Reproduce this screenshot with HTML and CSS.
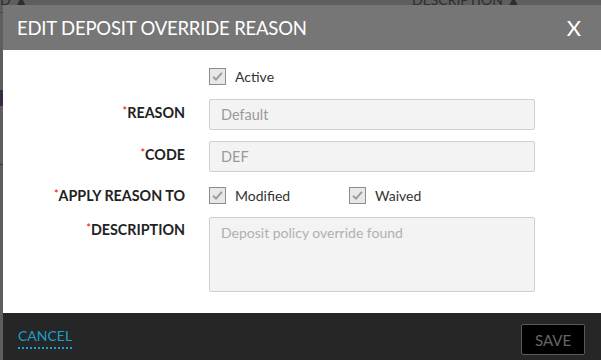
FILE: index.html
```html
<!DOCTYPE html>
<html>
<head>
<meta charset="utf-8">
<link rel="stylesheet" href="styles.css">
</head>
<body>
<div class="backdrop">
  <div class="bg-head">
    <span class="bg-col bg-id">ID ▲</span>
    <span class="bg-col bg-desc">DESCRIPTION ▲</span>
  </div>
  <div class="bg-rows">
    <div class="bg-mark"></div>
    <div class="bg-line"></div>
  </div>
</div>
<div class="modal">
  <div class="modal-header">
    <span class="modal-title">EDIT DEPOSIT OVERRIDE REASON</span>
    <span class="modal-close">X</span>
  </div>
  <div class="modal-body">
    <div class="row row-active">
      <div class="label"></div>
      <div class="field">
        <label class="check"><span class="box"><svg viewBox="0 0 17 17" width="15" height="15"><path d="M3.5 8.8 L6.8 12 L13.5 4.5" fill="none" stroke="#9a9a9a" stroke-width="2.2"/></svg></span>Active</label>
      </div>
    </div>
    <div class="row row-input">
      <div class="label"><span class="req">*</span>REASON</div>
      <div class="field"><div class="input">Default</div></div>
    </div>
    <div class="row row-input">
      <div class="label"><span class="req">*</span>CODE</div>
      <div class="field"><div class="input">DEF</div></div>
    </div>
    <div class="row row-apply">
      <div class="label"><span class="req">*</span>APPLY REASON TO</div>
      <div class="field">
        <label class="check check-mod"><span class="box"><svg viewBox="0 0 17 17" width="15" height="15"><path d="M3.5 8.8 L6.8 12 L13.5 4.5" fill="none" stroke="#9a9a9a" stroke-width="2.2"/></svg></span>Modified</label>
        <label class="check"><span class="box"><svg viewBox="0 0 17 17" width="15" height="15"><path d="M3.5 8.8 L6.8 12 L13.5 4.5" fill="none" stroke="#9a9a9a" stroke-width="2.2"/></svg></span>Waived</label>
      </div>
    </div>
    <div class="row row-desc">
      <div class="label label-top"><span class="req">*</span>DESCRIPTION</div>
      <div class="field"><div class="input textarea">Deposit policy override found</div></div>
    </div>
  </div>
  <div class="modal-footer">
    <span class="cancel">CANCEL</span>
    <span class="save">SAVE</span>
  </div>
</div>
</body>
</html>
```
FILE: styles.css
```css
html, body {
  margin: 0;
  padding: 0;
}
body {
  width: 601px;
  height: 360px;
  overflow: hidden;
  position: relative;
  background: #5e5e5e;
  font-family: Lato, "Open Sans", sans-serif;
}
.backdrop {
  height: 360px;
}
.bg-head {
  height: 12px;
  position: relative;
  border-bottom: 1px solid #4a4a4a;
  color: #2e2e2e;
  font-size: 14px;
  overflow: hidden;
  white-space: nowrap;
}
.bg-col {
  position: absolute;
  top: -9px;
}
.bg-id { left: -4px; }
.bg-desc { left: 412px; }
.bg-rows {
  position: relative;
  height: 340px;
}
.bg-mark {
  position: absolute;
  left: 0;
  top: 77px;
  width: 3px;
  height: 16px;
  background: #3a2a40;
}
.bg-line {
  position: absolute;
  left: 0;
  top: 151px;
  width: 3px;
  height: 1px;
  background: #333;
}
.modal {
  position: absolute;
  left: 3px;
  top: 5px;
  width: 598px;
  display: flex;
  flex-direction: column;
  height: 355px;
}
.modal-header {
  height: 45px;
  background: #767676;
  display: flex;
  align-items: center;
  justify-content: space-between;
  padding: 0 20px 0 14px;
  color: #fff;
  flex: none;
  white-space: nowrap;
}
.modal-title {
  font-size: 18.5px;
  letter-spacing: -0.2px;
  padding-top: 1px;
}
.modal-close {
  font-size: 22px;
  font-weight: 400;
}
.modal-body {
  background: #fff;
  flex: 1;
  padding-top: 18px;
  display: flex;
  flex-direction: column;
}
.row {
  display: flex;
  align-items: center;
}
.label {
  width: 182px;
  text-align: right;
  font-size: 14.3px;
  font-weight: bold;
  color: #222;
  flex: none;
  white-space: nowrap;
}
.row-input .label {
  padding-bottom: 4px;
}
.label-top {
  align-self: flex-start;
  padding-top: 4px;
}
.req {
  color: #e00;
  font-size: 11px;
  vertical-align: 3px;
  font-weight: normal;
}
.field {
  margin-left: 24px;
  display: flex;
  align-items: center;
}
.row-active {
  height: 17px;
  margin-bottom: 14px;
}
.row-input {
  margin-bottom: 11px;
}
.row-apply {
  height: 17px;
  margin-top: 4px;
  margin-bottom: 13px;
}
.check {
  display: flex;
  align-items: center;
  font-size: 14px;
  color: #333;
}
.check-mod {
  width: 140px;
}
.box {
  width: 15px;
  height: 15px;
  border: 1px solid #8c8c8c;
  background: #e8e8e8;
  margin-right: 9px;
  display: flex;
}
.input {
  width: 313px;
  height: 29px;
  border: 1px solid #cfcfcf;
  border-radius: 2px;
  background: #f3f3f3;
  color: #9a9a9a;
  font-size: 14.5px;
  padding-left: 11px;
  line-height: 29px;
}
.textarea {
  line-height: 18px;
  padding-top: 6px;
  height: 67px;
  font-size: 14px;
  color: #b0b0b0;
}
.modal-footer {
  height: 47px;
  background: #262626;
  display: flex;
  align-items: flex-start;
  justify-content: space-between;
  padding: 0 16px 0 15px;
  flex: none;
}
.cancel {
  color: #1a9fcc;
  font-size: 14px;
  border-bottom: 2px dotted #1a9fcc;
  line-height: 14px;
  padding-bottom: 4px;
  margin-top: 16px;
}
.save {
  width: 62px;
  height: 29px;
  border: 1px solid #5a5a5a;
  border-radius: 2px;
  background: #000;
  color: #666;
  font-size: 15px;
  display: flex;
  align-items: center;
  justify-content: center;
  margin-top: 11px;
}
```
